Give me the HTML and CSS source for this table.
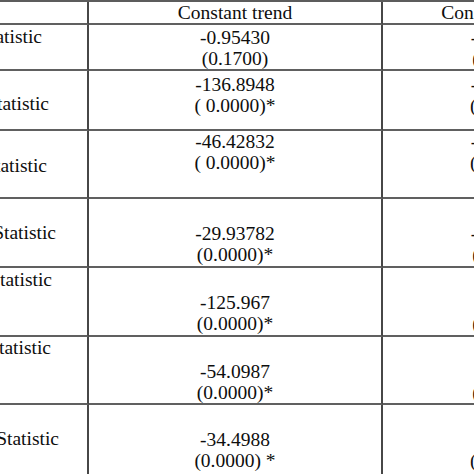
FILE: index.html
```html
<!DOCTYPE html>
<html>
<head>
<meta charset="utf-8">
<link rel="stylesheet" href="styles.css">
</head>
<body>
<div class="table">
  <div class="cell lab"></div>
  <div class="cell head">Constant trend</div>
  <div class="cell head last">Constant no trend</div>

  <div class="cell lab lt r1"><span>ADF t-Statistic</span></div>
  <div class="cell val vt1"><span>-0.95430</span><span>(0.1700)</span></div>
  <div class="cell val vt1 last"><span>-1.024135</span><span>(0.15210)</span></div>

  <div class="cell lab lm2 r2"><span>PP t-Statistic</span></div>
  <div class="cell val vt2"><span>-136.8948</span><span>( 0.0000)*</span></div>
  <div class="cell val vt2 last"><span>-135.4521</span><span>( 0.0000)*</span></div>

  <div class="cell lab lm3 r3"><span>DF-GLS t-Statistic</span></div>
  <div class="cell val vt3"><span>-46.42832</span><span>( 0.0000)*</span></div>
  <div class="cell val vt3 last"><span>-45.98217</span><span>( 0.0000)*</span></div>

  <div class="cell lab lm r4"><span>ADF t-Statistic</span></div>
  <div class="cell val vm"><span>-29.93782</span><span>(0.0000)*</span></div>
  <div class="cell val vm last"><span>-29.71054</span><span>(0.0000)*</span></div>

  <div class="cell lab lt r5"><span>PP t-Statistic</span></div>
  <div class="cell val vm"><span>-125.967</span><span>(0.0000)*</span></div>
  <div class="cell val vm last"><span>-124.832</span><span>(0.0000)*</span></div>

  <div class="cell lab lt0 r6"><span>DF-GLS t-Statistic</span></div>
  <div class="cell val vm"><span>-54.0987</span><span>(0.0000)*</span></div>
  <div class="cell val vm last"><span>-53.8714</span><span>(0.0000)*</span></div>

  <div class="cell lab lm r7"><span>KPSS t-Statistic</span></div>
  <div class="cell val vm"><span>-34.4988</span><span>(0.0000) *</span></div>
  <div class="cell val vm last"><span>-34.2109</span><span>(0.0000) *</span></div>
</div>
</body>
</html>
```

FILE: styles.css
```css
html, body {
  margin: 0;
  padding: 0;
  background: #ffffff;
  overflow: hidden;
}

.table {
  display: grid;
  grid-template-columns: 89px 294px 255px;
  grid-template-rows: 23px 46px 60px 68px 69px 69px 68px 90px;
  width: 638px;
  border-top: 2px solid #5c5c5c;
  font-family: "Liberation Serif", "Times New Roman", serif;
  font-size: 19.5px;
  line-height: 21px;
  color: #0e0e0e;
}

.cell {
  box-sizing: border-box;
  border-bottom: 2px solid #606060;
  border-right: 2px solid #474747;
  overflow: hidden;
  white-space: nowrap;
}

.cell.last {
  border-right: none;
}

.head {
  text-align: center;
}

.val {
  display: flex;
  flex-direction: column;
  align-items: center;
}

.vt1 { padding-top: 2px; }
.vt2 { padding-top: 3px; }
.vt3 { padding-top: 0; }
.vm { padding-top: 24px; }

.lab {
  display: flex;
  justify-content: flex-end;
  align-items: flex-start;
}

.lt { padding-top: 1px; }
.lt0 { padding-top: 0; }
.lm { padding-top: 23px; }
.lm2 { padding-top: 22px; }
.lm3 { padding-top: 24px; }

.r1 { padding-right: 45px; }
.r2 { padding-right: 38px; }
.r3 { padding-right: 40px; }
.r4 { padding-right: 31px; }
.r5 { padding-right: 35px; }
.r6 { padding-right: 36px; }
.r7 { padding-right: 28px; }
```
